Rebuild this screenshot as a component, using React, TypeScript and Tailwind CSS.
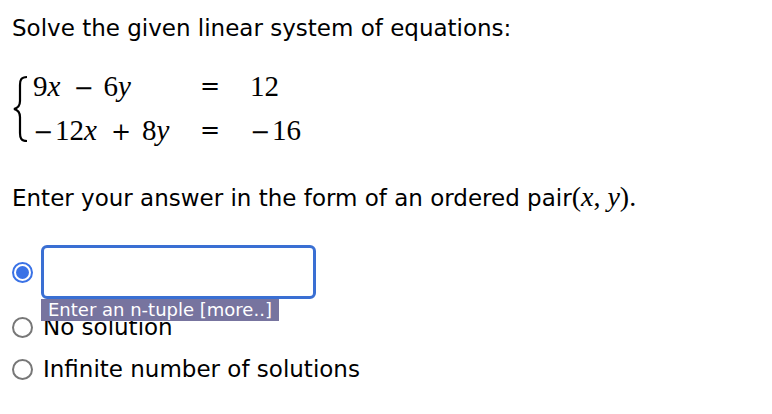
import React from "react";

const sans = "font-['DejaVu_Sans',sans-serif]";
const math = "font-['Liberation_Serif','DejaVu_Serif',serif]";
const op = "font-['DejaVu_Serif',serif] text-[24px] font-light";

function Brace() {
  return (
    <svg width="18" height="68" viewBox="0 0 18 68" className="shrink-0">
      <path
        d="M15 2 C9 2 8 5 8 10 L8 26 C8 31 6 33 2 34 C6 35 8 37 8 42 L8 58 C8 63 9 66 15 66"
        fill="none"
        stroke="#000"
        strokeWidth="2.2"
      />
    </svg>
  );
}

function Radio({ checked }: { checked?: boolean }) {
  if (checked) {
    return (
      <div className="w-[21px] h-[21px] rounded-full border-[2px] border-[#3a72e6] bg-white flex items-center justify-center shrink-0">
        <div className="w-[13px] h-[13px] rounded-full bg-[#3a72e6]" />
      </div>
    );
  }
  return (
    <div className="w-[21px] h-[21px] rounded-full border-[2px] border-[#777] bg-white shrink-0" />
  );
}

export default function App() {
  return (
    <div className={`w-[772px] h-[414px] bg-white text-black ${sans} relative`}>
      <div className="pl-[12px] pt-[15px]">
        <div className="text-[23px] leading-[26px]">Solve the given linear system of equations:</div>

        <div className={`mt-[24px] flex items-center ${math} text-[29px]`}>
          <Brace />
          <div className="grid grid-cols-[167px_50px_auto] ml-[3px] leading-[42px]">
            <div>9<i className="mr-[3px]">x</i><span className={`${op} mx-[10px]`}>−</span>6<i>y</i></div>
            <div className={op}>=</div>
            <div>12</div>
            <div><span className={`${op} mr-[2px]`}>−</span>12<i className="mr-[3px]">x</i><span className={`${op} mx-[11px]`}>+</span>8<i>y</i></div>
            <div className={op}>=</div>
            <div><span className={`${op} mr-[2px]`}>−</span>16</div>
          </div>
        </div>

        <div className="mt-[31px] text-[23px] leading-[26px]">
          Enter your answer in the form of an ordered pair
          <span className={`${math} text-[28px]`}>(<i>x</i>, <i>y</i>).</span>
        </div>

        <div className="mt-[34px] flex items-center gap-[8px] relative">
          <Radio checked />
          <div className="w-[275px] h-[54px] border-[3px] border-[#3a6fd3] rounded-[6px] bg-white" />
          <div className="absolute left-[29px] top-[54px] bg-[#77749f] text-white text-[18px] leading-[22px] px-[7px] w-[238px] z-10 whitespace-nowrap">
            Enter an n-tuple [more..]
          </div>
        </div>

        <div className="mt-[15px] flex items-center gap-[10px]">
          <Radio />
          <div className="text-[23px] leading-[26px]">No solution</div>
        </div>

        <div className="mt-[16px] flex items-center gap-[10px]">
          <Radio />
          <div className="text-[23px] leading-[26px]">Infinite number of solutions</div>
        </div>
      </div>
    </div>
  );
}
